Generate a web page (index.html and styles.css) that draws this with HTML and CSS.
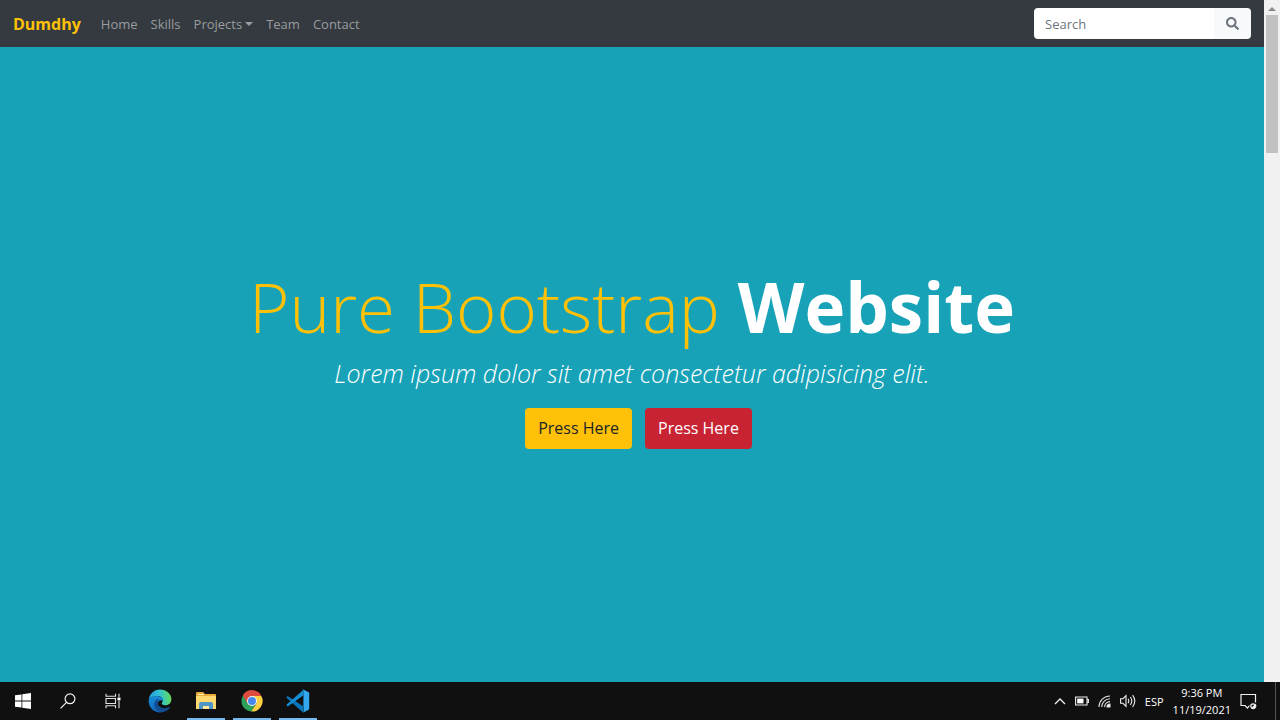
FILE: index.html
```html
<!DOCTYPE html>
<html lang="en">
<head>
<meta charset="utf-8">
<meta name="viewport" content="width=device-width, initial-scale=1">
<title>Dumdhy</title>
<link rel="stylesheet" href="styles.css">
</head>
<body>
<div class="window">
    <div class="page">
        <nav class="navbar">
            <a class="navbar-brand" href="#">Dumdhy</a>
            <ul class="navbar-nav">
                <li><a class="nav-link" href="#home">Home</a></li>
                <li><a class="nav-link" href="#skills">Skills</a></li>
                <li><a class="nav-link dropdown-toggle" href="#projects">Projects</a></li>
                <li><a class="nav-link" href="#team">Team</a></li>
                <li><a class="nav-link" href="#contact">Contact</a></li>
            </ul>
            <form class="search">
                <input class="search-input" type="search" placeholder="Search" aria-label="Search">
                <button class="search-btn" type="button" aria-label="Submit search">
                    <svg width="13" height="13" viewBox="0 0 512 512" fill="currentColor"><path d="M505 442.700L405.300 343c-4.500-4.500-10.600-7-17-7H372c27.600-35.300 44-79.700 44-128C416 93.100 322.900 0 208 0S0 93.100 0 208s93.100 208 208 208c48.300 0 92.700-16.400 128-44v16.300c0 6.400 2.500 12.500 7 17l99.700 99.700c9.400 9.400 24.600 9.400 33.900 0l28.300-28.300c9.400-9.400 9.400-24.600.1-34zM208 336c-70.700 0-128-57.200-128-128 0-70.700 57.200-128 128-128 70.700 0 128 57.200 128 128 0 70.700-57.200 128-128 128z"/></svg>
                </button>
            </form>
        </nav>
        <header class="hero" id="home">
            <h1 class="hero-title">Pure Bootstrap <strong>Website</strong></h1>
            <p class="hero-text">Lorem ipsum dolor sit amet consectetur adipisicing elit.</p>
            <div class="hero-buttons">
                <button class="btn btn-warning" type="button">Press Here</button>
                <button class="btn btn-danger" type="button">Press Here</button>
            </div>
        </header>
    </div>
    <div class="scrollbar">
        <svg class="scroll-arrow" width="8" height="5" viewBox="0 0 8 5"><path d="M0 5L4 1l4 4z" fill="#8a8a8a"/></svg>
        <div class="scroll-thumb"></div>
    </div>
</div>
<footer class="taskbar">
    <div class="tasks">
        <button class="task" type="button" aria-label="Start">
            <svg width="16" height="16" viewBox="0 0 16 16" fill="#fff"><path d="M0 2.300L6.500 1.400v6.200H0zM7.300 1.300L16 0v7.600H7.300zM0 8.400h6.500v6.200L0 13.700zM7.300 8.400H16V16l-8.700-1.300z"/></svg>
        </button>
        <button class="task" type="button" aria-label="Search Windows">
            <svg width="16" height="16" viewBox="0 0 16 16" fill="none" stroke="#f2f2f2" stroke-width="1.200"><circle cx="10" cy="5.800" r="4.900"/><path d="M6.500 9.300L.6 15.300"/></svg>
        </button>
        <button class="task" type="button" aria-label="Task view">
            <svg width="16" height="16" viewBox="0 0 16 16" fill="none" stroke="#e4e4e4" stroke-width="1.100"><path d="M1 .8v2.400h9.500V.8M1 15.200v-2.400h9.500v2.400M1 5.500h9.500v5H1zM14 .8v3M14 7.600v7.600"/><path d="M12.500 4.500h3v2.800h-3z" fill="#fff" stroke="none"/></svg>
        </button>
        <button class="task task-app" type="button" aria-label="Edge">
            <svg width="24" height="24" viewBox="0 0 24 24">
                <defs>
                    <linearGradient id="edgeTop" x1="0" y1=".5" x2="1" y2=".4"><stop offset="0" stop-color="#249bdc"/><stop offset=".5" stop-color="#31c3d5"/><stop offset="1" stop-color="#65d952"/></linearGradient>
                    <linearGradient id="edgeLow" x1="0" y1="0" x2="0" y2="1"><stop offset="0" stop-color="#178bd8"/><stop offset="1" stop-color="#1269bd"/></linearGradient>
                </defs>
                <path d="M.7 11C1.300 4.800 6 .5 12 .5c6.700 0 11.400 4.600 11.400 9.700 0 3.700-2.700 6-6 6-2.700 0-4.200-1-3.500-2.100 2.200-3.400-.2-7-4.600-7C5.600 7.100 2.200 8.600.7 11z" fill="url(#edgeTop)"/>
                <path d="M.6 11.500C1.700 8.700 5 6.800 8.800 7c4 .2 6.200 2.400 6.100 4.900-2-1.700-5.200-.3-5.200 3.200 0 4.200 3.900 7 8.500 6-2 1.600-4.300 2.400-6.700 2.300C5.300 23.100.3 18 .6 11.500z" fill="url(#edgeLow)"/>
                <path d="M9.100 10c-3.100 2.500-3.800 6.900-1.200 10.200 2.300 3 6.300 3.700 10.200 1.900 1.600-.8 3-2 3.900-3.500.2-.4-.1-.7-.5-.5-5.800 2.600-11.900 0-11.800-4.600 0-1.200.5-2.300 1.200-3-.6-.3-1.200-.5-1.800-.5z" fill="#124d91"/>
            </svg>
        </button>
        <button class="task task-app task-open" type="button" aria-label="File Explorer">
            <svg width="22" height="20" viewBox="0 0 22 20"><path d="M1 2q0-1 1-1h6l2 2h10q1 0 1 1v3H1z" fill="#e9a93b"/><path d="M3 3h6v1H3z" fill="#fff3b8"/><path d="M1 5h20v13H1z" fill="#ffd970"/><path d="M4 18v-5q0-2 2-2h10q2 0 2 2v5h-4v-3H8v3z" fill="#4f96c8"/><path d="M8 15h6v3H8z" fill="#ffe89c"/></svg>
        </button>
        <button class="task task-app task-open" type="button" aria-label="Chrome">
            <svg width="22" height="22" viewBox="0 0 22 22"><path d="M11 11L2 5.200A10.500 10.500 0 0 1 20.300 6z" fill="#dd4b3e"/><path d="M1.900 5.700A10.500 10.500 0 0 0 10.200 21.500L15.500 13.500 11 11z" fill="#2ca15a"/><path d="M11 6h9.300A10.500 10.500 0 0 1 10.200 21.500L15.500 13.500z" fill="#fdd044"/><path d="M1.900 5.600L6.500 13.500 11 6h9.300A10.500 10.500 0 0 0 1.900 5.600z" fill="#dd4b3e"/><circle cx="11" cy="11" r="5" fill="#f4f4f4"/><circle cx="11" cy="11" r="4" fill="#4688ef"/></svg>
        </button>
        <button class="task task-app task-open" type="button" aria-label="Visual Studio Code">
            <svg width="24" height="24" viewBox="0 0 24 24"><path d="M17.500 6.500v11L1.700 6.900.7 7.800v1.100L17 23.500V17.500z" fill="#0875b8"/><path d="M1.700 17.400L17.500 6.200V.7L.7 15.400v1.100l1 .9z" fill="#168ed3"/><path d="M17.300.6l5.400 2.600q.5.300.5.900v15.800q0 .6-.5.900l-5.400 2.600q-.7.300-1.200-.2 1.200.6 1.400-.8V1.600Q17.300.2 16.100.8q.5-.5 1.200-.2z" fill="#31a8ee"/></svg>
        </button>
    </div>
    <div class="tray">
        <svg width="12" height="7" viewBox="0 0 12 7" fill="none" stroke="#eee" stroke-width="1.300"><path d="M1 6l5-5 5 5"/></svg>
        <svg width="14" height="10" viewBox="0 0 14 10"><path d="M.6 1h11.400v8H.6zM12 3.500h1.400v3H12" fill="none" stroke="#eee" stroke-width="1.100"/><path d="M2.200 2.600h6.300v4.800H2.200z" fill="#fff"/></svg>
        <svg width="13" height="13" viewBox="0 0 13 13" fill="none" stroke="#ddd" stroke-width="1.100"><path d="M1 12A11 11 0 0 1 12 1M3.800 12A8.200 8.200 0 0 1 12 3.800M6.600 12A5.400 5.400 0 0 1 12 6.600" /><path d="M9 12q0-3 3-3v3z" fill="#fff"/></svg>
        <svg width="16" height="14" viewBox="0 0 16 14" fill="none" stroke="#eee" stroke-width="1.100"><path d="M.6 4.700H3L6 1.700v10.600L3 9.300H.6zM8 4.800q1.600 2.200 0 4.400M10.300 3q3 4 0 8M12.600 1.200q4.400 5.800 0 11.600"/></svg>
        <span class="lang">ESP</span>
        <div class="clock"><span>9:36 PM</span><span>11/19/2021</span></div>
        <svg width="17" height="17" viewBox="0 0 17 17" fill="none" stroke="#eee" stroke-width="1.200"><path d="M9.500 12.500L7.500 15l-2.500-2.500H1V1.500h14.500v8"/><circle cx="13" cy="13" r="2.200"/><path d="M11 15.200a3 3 0 0 0 4.300-4.400z" fill="#eee" stroke="none"/></svg>
    </div>
</footer>
</body>
</html>
```
FILE: styles.css
```css
*{box-sizing:border-box;}
body,h1,p,ul,form{margin:0;padding:0;}
ul{list-style:none;}
a{text-decoration:none;}
button,input{font-family:inherit;border:0;margin:0;}
svg{display:block;}

body{display:flex;flex-direction:column;height:100vh;overflow:hidden;background:#17a2b8;font-family:"Open Sans","Noto Sans",sans-serif;color:#fff;}

.window{display:flex;flex:1;min-height:0;}
.page{display:flex;flex-direction:column;flex:1;}

/* navbar */
.navbar{display:flex;align-items:center;padding:8px 13px;background:#343a40;}
.navbar-brand{margin-right:14px;font-size:16px;font-weight:700;line-height:24px;color:#ffc107;}
.navbar-nav{display:flex;gap:1px;}
.nav-link{display:block;padding:0 6px;font-size:13px;line-height:20px;color:#999c9f;}
.nav-link:hover{color:#ccc;}
.dropdown-toggle::after{content:"";display:inline-block;margin-left:3px;vertical-align:3px;border:4px solid transparent;border-top-color:currentColor;border-bottom:0;}
.search{display:flex;width:217px;margin-left:auto;border-radius:4px;overflow:hidden;}
.search-input{flex:1;min-width:0;height:31px;padding:0 11px;font-size:13px;background:#fff;color:#495057;}
.search-input::placeholder{color:#6c757d;}
.search-btn{padding:0 12px;background:#f8f9fa;color:#6c757d;}

/* hero */
.hero{display:flex;flex:1;flex-direction:column;align-items:center;justify-content:center;padding-bottom:18px;text-align:center;}
.hero-title{margin-bottom:4px;font-size:69px;font-weight:300;line-height:86px;color:#ffc107;}
.hero-title strong{font-weight:700;color:#fff;}
.hero-text{margin-bottom:15px;font-size:25px;font-style:italic;font-weight:300;line-height:40px;}
.hero-buttons{display:flex;}
.btn{margin-left:13px;padding:8px 13px;border-radius:4px;font-size:16px;line-height:25px;}
.btn-warning{background:#ffc107;color:#212529;}
.btn-danger{background:#c82333;color:#fff;}

/* scrollbar */
.scrollbar{display:flex;flex-direction:column;align-items:center;width:16px;padding-top:6px;background:#f1f1f1;}
.scroll-thumb{width:12px;height:138px;margin-top:4px;background:#c1c1c1;}

/* taskbar */
.taskbar{display:flex;justify-content:space-between;height:38px;background:#101010;}
.tasks{display:flex;}
.task{display:flex;align-items:center;justify-content:center;width:45px;padding:0;background:none;}
.task-app{width:38px;margin:0 2px 0 6px;border-bottom:2px solid transparent;border-top:2px solid transparent;}
.task-open{border-bottom-color:#76b9ed;}
.tray{display:flex;align-items:center;gap:9px;margin-right:4px;padding-right:18px;border-right:1px solid #555;font-size:11px;}
.clock{display:flex;flex-direction:column;align-items:center;line-height:17px;}
```
